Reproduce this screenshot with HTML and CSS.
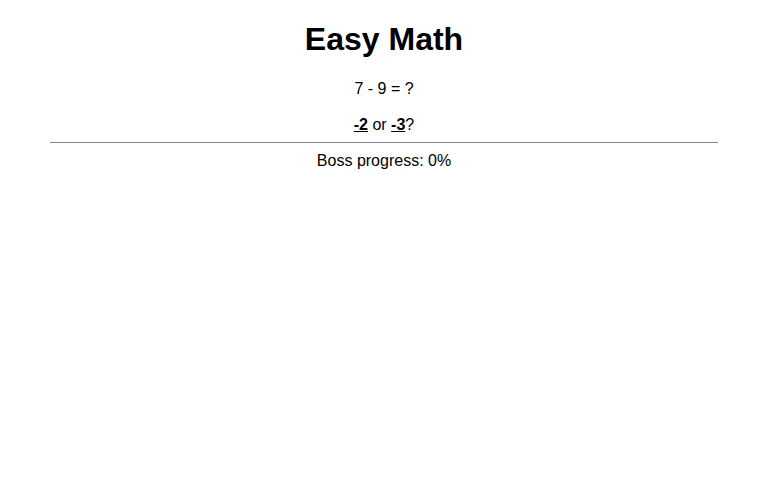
FILE: index.html
```html
<!DOCTYPE html>
<html>
<head>
<meta charset="utf-8">
<link rel="stylesheet" href="styles.css">
</head>
<body>
<div class="game">
  <h1 class="title">Easy Math</h1>
  <p class="question">7 - 9 = ?</p>
  <p class="answers"><a class="answer" href="#">-2</a> or <a class="answer" href="#">-3</a>?</p>
  <hr class="divider">
  <div class="progress">Boss progress: 0%</div>
</div>
</body>
</html>
```
FILE: styles.css
```css
html, body {
  margin: 0;
  padding: 0;
  background: #fff;
}
body {
  font-family: "Liberation Sans", Arial, sans-serif;
  font-size: 16px;
  color: #000;
}
.game {
  padding: 8px 50px;
  text-align: center;
}
.title {
  font-size: 32px;
  font-weight: bold;
  margin: 13px 0 22px;
}
.question {
  margin: 0;
}
.answers {
  margin: 18px 0 8px;
}
.answer {
  color: #000;
  font-weight: bold;
  text-decoration: underline;
}
.divider {
  border: 0;
  border-top: 1px solid #888;
  margin: 0 0 9px;
}
.progress {
  margin: 0;
}
```
